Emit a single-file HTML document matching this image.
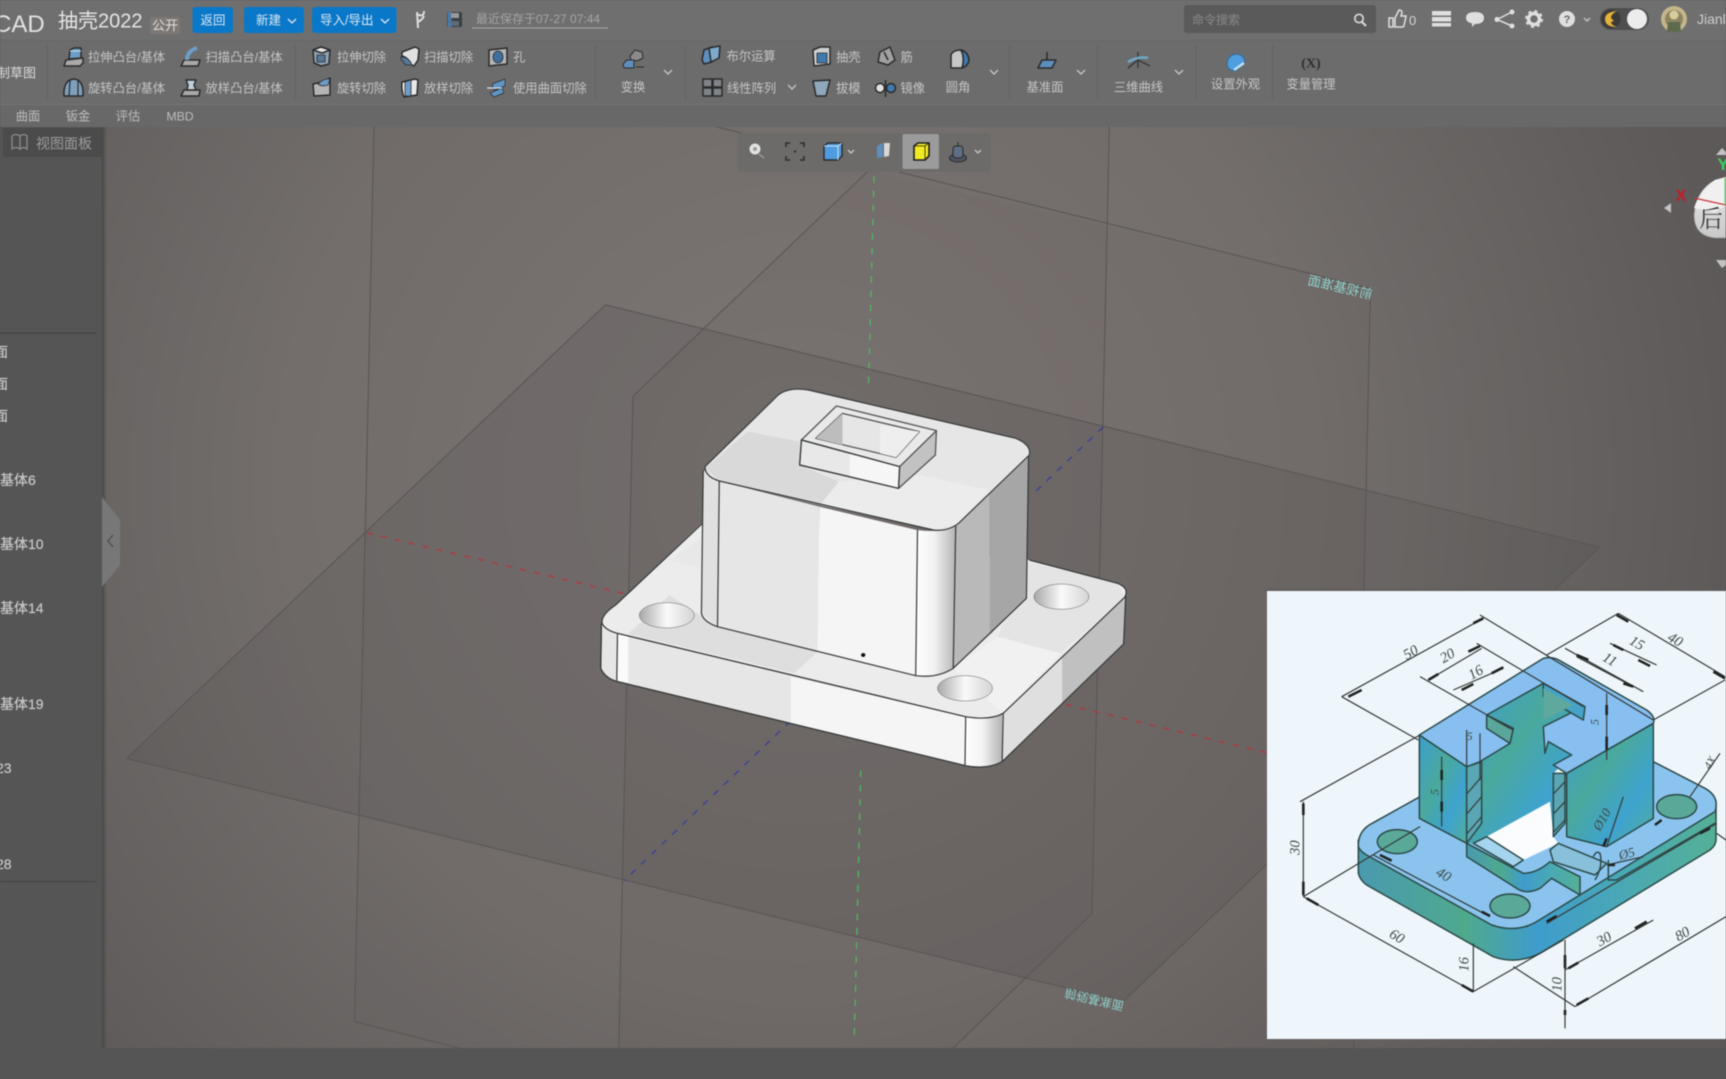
<!DOCTYPE html>
<html><head><meta charset="utf-8"><title>CAD</title>
<style>
html,body{margin:0;padding:0;width:1726px;height:1079px;overflow:hidden;background:#555}
svg{display:block;position:absolute;left:0;top:0;filter:blur(.5px)}
text{font-family:"Liberation Sans","Noto Sans CJK SC",sans-serif}
.r{font-size:12.3px;fill:#c6c6c6}
.c{font-size:12.3px;fill:#c6c6c6;text-anchor:middle}
.t{font-size:12.3px;fill:#bdbdbd;text-anchor:middle}
.s{font-size:14px;fill:#cccccc;stroke:#cccccc;stroke-width:.15}
.d{font-family:"Liberation Serif",serif;font-style:italic;font-size:44px;fill:#3f4a44}
.ln{stroke:#343a37;stroke-width:1.2;vector-effect:non-scaling-stroke;stroke-linejoin:round}
.n{fill:none}
.k{stroke:#2c4a48;stroke-width:1.5;vector-effect:non-scaling-stroke;stroke-linejoin:round}
.a{fill:none;stroke:#1f2422;stroke-width:2.6;vector-effect:non-scaling-stroke}
.m{stroke:#555;stroke-width:1.3;vector-effect:non-scaling-stroke;stroke-linejoin:round}
.ic{stroke:#2b2b2b;stroke-width:1.5;stroke-linejoin:round}
.chev{fill:none;stroke:#c0c0c0;stroke-width:1.5}
</style></head><body>
<svg width="1726" height="1079" viewBox="0 0 1726 1079" xmlns="http://www.w3.org/2000/svg">
<defs>
<radialGradient id="vp" gradientUnits="userSpaceOnUse" cx="800" cy="480" r="950">
<stop offset="0" stop-color="#7e7877"/><stop offset=".55" stop-color="#736e6c"/><stop offset="1" stop-color="#5c5958"/>
</radialGradient>
<linearGradient id="shd" x1="0" x2="1" y1="0" y2="0"><stop offset="0" stop-color="#494746"/><stop offset="1" stop-color="#494746" stop-opacity="0"/></linearGradient>
<linearGradient id="cyl" x1="0" x2="1" y1="0" y2="0"><stop offset="0" stop-color="#fff"/><stop offset=".45" stop-color="#f3f3f3"/><stop offset="1" stop-color="#b4b4b4"/></linearGradient>
<linearGradient id="hole" x1="0" x2="1" y1="0" y2="0"><stop offset="0" stop-color="#a8a8a8"/><stop offset=".5" stop-color="#fafafa"/><stop offset="1" stop-color="#d4d4d4"/></linearGradient>
<linearGradient id="teal" x1="0" x2="1" y1="0" y2="1"><stop offset="0" stop-color="#3d9ecf"/><stop offset=".4" stop-color="#4aa99c"/><stop offset=".7" stop-color="#3ea3cf"/><stop offset="1" stop-color="#52ad9c"/></linearGradient>
<linearGradient id="tealb" x1="0" x2="1" y1="0" y2="0"><stop offset="0" stop-color="#4a9ab0"/><stop offset=".3" stop-color="#4fa98d"/><stop offset=".5" stop-color="#3f9ccc"/><stop offset=".75" stop-color="#4aa9b4"/><stop offset="1" stop-color="#55b096"/></linearGradient>
<linearGradient id="cube" x1="0" x2="0" y1="0" y2="1"><stop offset="0" stop-color="#ececec"/><stop offset="1" stop-color="#c8c8c8"/></linearGradient>
</defs>

<!-- viewport -->
<rect x="0" y="120" width="1726" height="935" fill="url(#vp)"/>
<g transform="scale(1.1008)">
<polygon points="550,277 1453,497 1020,910 115,689" fill="#484444" fill-opacity=".14"/>
<polygon points="340,105 1008,105 992,830 865,953 420,953 322,928" fill="#484444" fill-opacity=".04"/>
<polygon points="790,155 1245,262 1230,953 562,953 575,360" fill="#484444" fill-opacity=".05"/>
<g fill="none" stroke="#5a5654" stroke-width="1">
<path d="M550,277 L1453,497 L1020,910 L115,689 Z"/>
<path d="M340,105 L322,928 L420,953 M1008,105 L992,830 L865,953"/>
<path d="M650,115 L1245,262 L1230,953"/>
<path d="M575,360 L562,953 M575,360 L810,135"/>
</g>
<g fill="none" stroke-width="1.2" stroke-dasharray="6 7">
<path d="M333,484 L570,540 M968,640 L1152,684" stroke="#b0383c"/>
<path d="M1002,388 L937,450 M718,655 L567,800" stroke="#3a3f9c"/>
<path d="M794,160 L789,352 M782,700 L776,945" stroke="#4fb85a"/>
</g>
<text transform="translate(1195,260) rotate(13) scale(-1,1) translate(-52,0)" style="font-size:12px;fill:#8fd0cc">前视基准面</text>
<text transform="translate(968,898) rotate(13) scale(1,-1)" style="font-size:11px;fill:#8fd0cc">前视基准面</text>
</g>

<!-- model -->
<g transform="translate(580,370) scale(.35714,.33333)">
<path class="m" d="M60,760 L58,895 Q70,925 105,935 L1080,1187 Q1140,1200 1182,1175 L1522,822 L1528,680 L1185,1030 L1080,1040 L105,790 Z" fill="#e6e6e6"/>
<polygon points="590,920 1080,1042 1080,1187 590,1060" fill="#f5f5f5"/>
<path d="M1080,1042 Q1140,1050 1182,1030 L1182,1175 Q1140,1200 1080,1187 Z" fill="url(#cyl)"/>
<polygon points="1182,1030 1350,855 1350,1000 1182,1175" fill="#dfdfdf"/>
<polygon points="1350,855 1526,680 1522,822 1350,1000" fill="#c0c0c0"/>
<polygon points="105,792 135,800 135,938 105,932" fill="#fafafa"/>
<path d="M62,760 Q58,735 100,705 L345,455 L1258,570 L1505,640 Q1540,655 1525,682 L1185,1030 Q1150,1052 1080,1040 L105,790 Q70,780 62,760 Z" fill="#ececec"/>
<polygon points="385,770 665,845 600,910 135,792 250,675" fill="#dedede"/>
<polygon points="250,570 345,595 345,500" fill="#e8e8e8"/>
<polygon points="1045,895 1170,800 1345,850 1185,1030" fill="#f1f1f1"/>
<polygon points="1250,575 1505,640 1525,682 1345,850 1170,800" fill="#e4e4e4"/>
<path class="ln n" d="M345,458 L100,705 Q58,735 62,760 Q70,780 105,790 L1080,1040 Q1150,1052 1185,1030 L1525,682 Q1540,655 1505,640 L1258,570"/>
<path class="ln n" d="M105,790 L103,932 M1080,1040 L1078,1187 M1185,1030 L1182,1175 M60,760 L58,895 Q70,925 105,935 L1080,1187 Q1140,1200 1182,1175 L1522,822 L1528,680"/>
<g class="m" fill="url(#hole)">
<ellipse cx="243" cy="736" rx="77" ry="38"/><ellipse cx="1078" cy="955" rx="77" ry="38"/><ellipse cx="1348" cy="680" rx="77" ry="38"/>
</g>
<polygon points="345,300 390,333 385,770 340,730" fill="#e0e0e0"/>
<polygon points="390,333 670,410 665,845 385,770" fill="#e6e6e6"/>
<polygon points="670,410 950,482 940,917 665,845" fill="#f5f5f5"/>
<path d="M945,480 Q1000,490 1052,468 L1045,895 Q1000,925 940,917 Z" fill="url(#cyl)"/>
<polygon points="1052,468 1147,370 1147,795 1045,895" fill="#b9b9b9"/>
<polygon points="1147,370 1256,255 1250,685 1147,795" fill="#a6a6a6"/>
<path class="ln n" d="M345,300 L340,730 Q345,755 385,770 L940,917 Q1000,925 1045,895 L1250,685 L1256,255 M390,333 L385,770 M945,480 L940,917 M1052,468 L1045,895"/>
<path d="M350,290 L555,75 Q585,50 640,60 L1220,205 Q1265,225 1258,255 L1060,460 Q1030,485 990,480 L390,333 Q350,320 350,290 Z" fill="#e6e6e6"/>
<polygon points="470,185 615,215 615,285 725,335 672,405 390,333 350,295" fill="#d9d9d9"/>
<polygon points="725,335 950,315 1145,360 1060,460 990,480 672,405" fill="#ececec"/>
<path class="ln n" d="M350,290 L555,75 Q585,50 640,60 L1220,205 Q1265,225 1258,255 L1060,460 Q1030,485 990,480 L390,333 Q350,320 350,290 Z"/>
<polygon class="m" points="620,210 718,108 998,182 895,290" fill="#e9e9e9"/>
<polygon class="m" points="620,210 895,290 892,355 615,285" fill="#e8e8e8"/>
<polygon points="755,250 895,290 892,355 755,318" fill="#f6f6f6"/>
<polygon class="m" points="895,290 998,182 995,255 892,355" fill="#c2c2c2"/>
<path class="ln n" d="M620,210 L895,290 L892,355 L615,285 Z"/>
<polygon class="m" points="660,205 735,130 950,185 885,262" fill="#e6e6e6"/>
<polygon points="660,205 735,130 735,225" fill="#bdbdbd"/>
<polygon points="840,165 950,185 885,262 840,250" fill="#eeeeee"/>
<circle cx="793" cy="855" r="6" fill="#111"/>
</g>

<!-- sidebar -->
<rect x="102" y="127" width="5" height="921" fill="url(#shd)"/>
<rect x="0" y="127" width="102" height="921" fill="#555"/>
<rect x="0" y="1048" width="1726" height="31" fill="#555"/>
<rect x="3" y="128" width="99" height="29" fill="#4b4b4b"/>
<path d="M12,136 Q16,133 20,136 L20,149 Q16,146 12,149 Z M20,136 Q24,133 27,136 L27,149 Q24,146 20,149 Z" fill="none" stroke="#8c8c8c" stroke-width="1.3"/>
<text x="36" y="148.500" style="font-size:14px;fill:#9c9c9c">视图面板</text>
<rect x="0" y="332.500" width="96" height="1.200" fill="#444"/>
<rect x="0" y="881" width="96" height="1.200" fill="#444"/>
<text class="s" x="-6" y="357">面</text><text class="s" x="-6" y="389">面</text><text class="s" x="-6" y="421">面</text>
<text class="s" x="0" y="485">基体6</text><text class="s" x="0" y="549">基体10</text><text class="s" x="0" y="613">基体14</text><text class="s" x="0" y="709">基体19</text>
<text class="s" x="-4" y="773">23</text><text class="s" x="-4" y="869">28</text>
<polygon points="102,497 120,520 120,565 102,587" fill="#777"/>
<path d="M113,535 L108,541 L113,547" fill="none" stroke="#4c4c4c" stroke-width="1.300"/>

<!-- top bar -->
<rect x="0" y="0" width="1726" height="40" fill="#6f6f6f"/>
<rect x="0" y="40" width="1726" height="64" fill="#6c6c6c"/>
<rect x="0" y="40" width="1726" height="1" fill="#676767"/>
<rect x="0" y="104" width="1726" height="23" fill="#686868"/>
<rect x="0" y="104" width="1726" height="1" fill="#737373"/>
<text x="-6" y="32" style="font-size:24px;fill:#e2e2e2">CAD</text>
<text x="58" y="27.500" style="font-size:20px;fill:#e6e6e6">抽壳2022</text>
<rect x="150" y="17" width="30" height="17" rx="2" fill="#7e7874"/>
<text x="165" y="30" style="font-size:13px;fill:#e0e0e0;text-anchor:middle">公开</text>
<rect x="192.500" y="7" width="40.500" height="26" rx="3" fill="#0a78c8"/>
<text x="213" y="24.500" style="font-size:12.500px;fill:#dce8f2;text-anchor:middle">返回</text>
<rect x="244" y="7" width="60" height="26" rx="3" fill="#0a78c8"/>
<text x="256" y="24.500" style="font-size:12.500px;fill:#dce8f2">新建</text>
<path d="M288,19 L292,23 L296,19" fill="none" stroke="#dce8f2" stroke-width="1.300"/>
<rect x="312" y="7" width="84.500" height="26" rx="3" fill="#0a78c8"/>
<text x="320" y="24.500" style="font-size:12.500px;fill:#dce8f2">导入/导出</text>
<path d="M381,19 L385,23 L389,19" fill="none" stroke="#dce8f2" stroke-width="1.300"/>
<path d="M417,12 L418,28 M417,14 Q424,18 424,11 M418,22 Q423,19 424,16" fill="none" stroke="#dedede" stroke-width="2"/>
<rect x="447" y="12" width="15" height="15" rx="1" fill="#3a3f45"/><rect x="447.500" y="12" width="4" height="15" fill="#4a78a8"/><rect x="451" y="13" width="8" height="5" fill="#9a9a9a"/><rect x="451" y="21" width="8" height="5" fill="#5e6a78"/>
<text x="476" y="23" style="font-size:12px;fill:#a4a4a4">最近保存于07-27 07:44</text>
<rect x="472" y="27.500" width="136" height="1" fill="#a4a4a4"/>

<!-- right top -->
<rect x="1184" y="5" width="192" height="28" rx="3" fill="#5a5a5a"/>
<text x="1192" y="24" style="font-size:12px;fill:#8a8a8a">命令搜索</text>
<circle cx="1359" cy="18.500" r="4.200" fill="none" stroke="#d8d8d8" stroke-width="1.700"/><path d="M1362,22 L1366,26" stroke="#d8d8d8" stroke-width="2"/>
<path d="M1389,18 L1393,18 L1393,27 L1389,27 Z M1395,18 L1399,10 Q1402,10 1402,13 L1401,16 L1406,16 Q1406,17 1404,25 Q1404,27 1402,27 L1395,27 Z" fill="none" stroke="#e0e0e0" stroke-width="1.500"/>
<text x="1409" y="25" style="font-size:13px;fill:#d8d8d8">0</text>
<g fill="#dfdfdf"><rect x="1432" y="11" width="19" height="4.500"/><rect x="1432" y="17" width="19" height="4.500"/><rect x="1432" y="23" width="19" height="3.500"/></g>
<path d="M1475,12 Q1484,12 1484,18 Q1484,24 1475,24 L1472,27 L1472,23.500 Q1466,22 1466,18 Q1466,12 1475,12 Z" fill="#dfdfdf"/>
<path d="M1512,12 L1497,19.500 L1512,26" fill="none" stroke="#dfdfdf" stroke-width="1.500"/><circle cx="1512" cy="12" r="2.500" fill="#dfdfdf"/><circle cx="1497" cy="19.500" r="2.500" fill="#dfdfdf"/><circle cx="1512" cy="26" r="2.500" fill="#dfdfdf"/>
<circle cx="1534" cy="19" r="5.500" fill="none" stroke="#dfdfdf" stroke-width="3.500"/><circle cx="1534" cy="19" r="8" fill="none" stroke="#dfdfdf" stroke-width="2" stroke-dasharray="3 3.300"/>
<circle cx="1567" cy="19" r="8" fill="#dfdfdf"/><text x="1567" y="23" style="font-size:11px;fill:#666;text-anchor:middle;font-weight:bold">?</text>
<path d="M1584,18 L1587,21 L1590,18" class="chev"/>
<rect x="1600" y="8" width="49" height="22" rx="11" fill="#4e4e4e"/>
<circle cx="1611" cy="19" r="9.500" fill="#3c3a38"/>
<path d="M1617,11 Q1605,12 1605,19 Q1605,27 1617,27 Q1611,25 1611,22 L1614,21 L1611,18 Q1611,14 1617,11 Z" fill="#e6b23a"/>
<circle cx="1637" cy="19" r="10" fill="#ececec"/>
<circle cx="1674" cy="19" r="13" fill="#c4b68a"/><circle cx="1674" cy="19" r="9" fill="#8d8560"/><circle cx="1674" cy="15" r="4.500" fill="#d8cc9c"/><path d="M1667,32 L1668,22 L1680,22 L1681,32 Z" fill="#5e6a4e"/>
<text x="1697" y="24" style="font-size:14px;fill:#cfcfcf">Jianl</text>

<!-- ribbon separators -->
<g fill="#646464"><rect x="47" y="45" width="1" height="55"/><rect x="295" y="45" width="1" height="55"/><rect x="595" y="45" width="1" height="55"/><rect x="685" y="45" width="1" height="55"/><rect x="1009" y="45" width="1" height="55"/><rect x="1097" y="45" width="1" height="55"/><rect x="1195.500" y="45" width="1" height="55"/><rect x="1272" y="45" width="1" height="55"/></g>
<text x="-3" y="77.500" style="font-size:13px;fill:#dcdcdc">制草图</text>

<!-- feature icons -->
<g class="ic">
<path d="M64,66 L66,60 L83,58 L83,63 L80,66 Z" fill="#a9a9a9"/><path d="M69,59 L70,50 L74,48 L81,48 L81,58 Z" fill="#6d9dc6"/><path d="M70,51 L81,51" fill="none" stroke="#cfe0ec" stroke-width="1"/>
<path d="M64,96 Q63,80 74,79 Q84,80 83,96 Z" fill="#7ea0bc"/><path d="M70,81 L69,96 M78,81 L78,96" fill="none" stroke="#2b2b2b" stroke-width="1.200"/>
<path d="M181,66 L184,60 L200,60 L198,66 Z" fill="#a9a9a9"/><path d="M187,60 Q187,51 197,48" fill="none" stroke="#6d9dc6" stroke-width="4"/>
<path d="M181,96 L184,90 L200,90 L199,96 Z" fill="#a9a9a9"/><path d="M187,90 L188,85 L186,80 L196,80 L194,85 L196,90 Z" fill="#bcd0de"/>
<path d="M313,50 L321,47 L330,50 L329,64 L321,66 L314,63 Z" fill="#8fa2b4"/><path d="M313,50 L321,47 L330,50 L322,53 Z" fill="#e8e8e8"/><rect x="317" y="55" width="8" height="7" fill="#56789a" stroke-width=".8"/>
<path d="M313,84 L322,82 L330,78 L330,95 L314,96 Z" fill="#b4b4b4"/><path d="M318,84 Q324,78 330,79 L328,85 Q322,87 318,84 Z" fill="#6d9dc6" stroke-width=".8"/>
<path d="M402,52 L415,47 L419,49 L418,60 L414,66 L410,64 Q409,58 402,56 Z" fill="#e0e0e0"/><path d="M401,57 Q409,57 412,65 L405,65 Q404,61 401,60 Z" fill="#56789a" stroke-width=".8"/>
<path d="M402,82 L415,79 L418,80 L417,95 L404,97 Q401,90 402,82 Z" fill="#e8e8e8"/><path d="M405,82 L411,80 L411,96 L405,96 Z" fill="#6d9dc6" stroke-width=".8"/>
<path d="M489,50 L507,48 L507,64 L489,66 Z" fill="#b4b4b4"/><ellipse cx="498" cy="57" rx="5" ry="6" fill="#3f6f9c" stroke-width=".8"/>
<path d="M492,84 L505,79 L505,86 L494,90 Z M490,93 L502,88 L504,93 L494,97 Z" fill="#5e94c4" stroke-width=".7"/><path d="M487,88 L502,88" stroke="#dfe8ee" stroke-width="1.200"/>
<path d="M630,56 L635,50 L642,52 L643,58 L637,61 L631,60 Z" fill="#8a8a8a" stroke-width="1"/><path d="M623,64 L627,60 L634,60 L634,68 L624,68 Z" fill="#5e8ebc" stroke-width="1"/><path d="M636,67 L644,67" fill="none" stroke-width="1"/>
<path d="M704,50 L712,47 L712,62 L704,64 L702,60 Z" fill="#5e8ebc"/><path d="M709,48 L720,46 L719,58 L711,62 Z" fill="#7ea8cc"/>
<g fill="#7f8488"><rect x="703" y="79" width="9" height="8"/><rect x="713" y="79" width="9" height="8"/><rect x="703" y="88" width="9" height="8"/><rect x="713" y="88" width="9" height="8"/></g>
<path d="M813,50 L820,47 L830,47 L830,64 L814,66 Z" fill="#cfcfcf"/><rect x="817" y="53" width="10" height="10" fill="#3f79ad" stroke-width=".8"/>
<path d="M813,81 L830,80 L826,96 L816,96 Z" fill="#8fa8bc"/>
<path d="M878,62 L880,52 L890,47 L895,60 L888,65 Z" fill="#a0a0a0"/><path d="M884,52 L888,60" fill="none"/>
<circle cx="880" cy="88" r="4.500" fill="#e0e0e0"/><circle cx="891" cy="88" r="4.500" fill="#3f79ad"/><path d="M885.500,80 L885.500,97" fill="none"/>
<path d="M951,55 Q953,50 961,50 Q968,52 969,60 Q968,66 962,68 L951,68 Z" fill="#c6c6c6"/><path d="M961,50 Q968,52 969,60 Q968,66 962,68 Q965,58 961,50 Z" fill="#3f79ad"/>
<polygon points="1038,68 1052,68 1056,60 1042,60" fill="#5e8ebc"/><path d="M1047,52 L1047,60" fill="none"/>
<path d="M1128,68 L1138,60 L1150,66 M1138,52 L1138,68" fill="none" stroke="#3a3a3a"/><path d="M1128,62 Q1138,56 1148,58" fill="none" stroke="#6fa8c8" stroke-width="2.500"/>
<path d="M1227,65 Q1227,55 1236,54 Q1244,54 1245,62 L1236,71 Q1228,71 1227,65 Z" fill="#4f9ee0" stroke="#3f6f96"/><path d="M1234,70 L1244,63" stroke="#bfe4f2" stroke-width="2.500"/>
</g>
<g class="chev">
<path d="M664,70 L668,74 L672,70"/><path d="M788,85 L792,89 L796,85"/><path d="M990,70 L994,74 L998,70"/><path d="M1077,70 L1081,74 L1085,70"/><path d="M1175,70 L1179,74 L1183,70"/>
</g>
<g>
<text class="r" x="88" y="61.500">拉伸凸台/基体</text><text class="r" x="205.500" y="61.500">扫描凸台/基体</text>
<text class="r" x="88" y="92.500">旋转凸台/基体</text><text class="r" x="205.500" y="92.500">放样凸台/基体</text>
<text class="r" x="337" y="61.500">拉伸切除</text><text class="r" x="424" y="61.500">扫描切除</text><text class="r" x="513" y="61.500">孔</text>
<text class="r" x="337" y="92.500">旋转切除</text><text class="r" x="424" y="92.500">放样切除</text><text class="r" x="513" y="92.500">使用曲面切除</text>
<text class="c" x="633" y="91.500">变换</text>
<text class="r" x="726.500" y="60.500">布尔运算</text><text class="r" x="727" y="92.500">线性阵列</text>
<text class="r" x="836" y="61.500">抽壳</text><text class="r" x="836" y="92.500">拔模</text>
<text class="r" x="900.500" y="61.500">筋</text><text class="r" x="900.500" y="92.500">镜像</text>
<text class="c" x="958" y="91.500">圆角</text><text class="c" x="1045" y="91.500">基准面</text><text class="c" x="1138.500" y="91.500">三维曲线</text>
<text class="c" x="1235.500" y="88.500">设置外观</text><text class="c" x="1311" y="88.500">变量管理</text>
<text x="1311" y="67.500" style="font-family:'Liberation Serif',serif;font-size:14px;font-weight:bold;fill:#2e2e2e;text-anchor:middle">(X)</text>
</g>
<text class="t" x="28" y="120.500">曲面</text><text class="t" x="78" y="120.500">钣金</text><text class="t" x="128" y="120.500">评估</text><text class="t" x="180" y="120.500">MBD</text>

<!-- view toolbar -->
<rect x="738" y="133" width="253" height="39" rx="3" fill="#6d6b69"/>
<rect x="902.500" y="134" width="36.500" height="35" rx="2" fill="#9b9b9b"/>
<circle cx="755" cy="149" r="5.500" fill="#e2e2e2"/><circle cx="755" cy="149" r="2" fill="#9a9a9a"/><path d="M759,154 L764,158" stroke="#b0b0b0" stroke-width="1"/>
<path d="M786,147 L786,143 L790,143 M800,143 L804,143 L804,147 M804,156 L804,160 L800,160 M790,160 L786,160 L786,156" fill="none" stroke="#2e2e2e" stroke-width="1.600"/><circle cx="795" cy="151.500" r="1.200" fill="#2e2e2e"/>
<path d="M824,146 L828,143 L842,143 L842,156 L838,160 L824,160 Z" fill="#4f9ce0" stroke="#2a2a2a" stroke-width="1.400"/><path d="M824,146 L838,146 L842,143 M838,146 L838,160" fill="none" stroke="#cfe2f2" stroke-width="1"/>
<path d="M848,150 L851,153 L854,150" class="chev"/>
<path d="M877,146 L883,143 L883,157 L877,158 Z" fill="#5e8ebc"/><path d="M884,143 L890,143 L889,156 L884,157 Z" fill="#d8d8d8"/>
<path d="M914,146 L918,143 L929,143 L929,156 L925,160 L914,160 Z" fill="#f2ea22" stroke="#1e1e1e" stroke-width="1.600"/><path d="M914,146 L925,146 L929,143 M925,146 L925,160" fill="none" stroke="#1e1e1e" stroke-width=".8"/>
<ellipse cx="958" cy="158" rx="8.500" ry="4" fill="#4e5560" stroke="#2a2a2a"/><rect x="953" y="146" width="10" height="12" rx="3" fill="#5e6e84" stroke="#2a2a2a"/><path d="M958,146 L958,142" stroke="#2a2a2a"/>
<path d="M975,150 L978,153 L981,150" class="chev"/>

<!-- nav cube -->
<path d="M1694,215 Q1696,190 1715,180 L1726,177 L1726,238 L1715,238 Q1694,236 1694,215 Z" fill="url(#cube)" stroke="#8a8a8a" stroke-width=".7"/>
<path d="M1694,208 Q1700,190 1715,180 L1726,177 L1726,205 L1715,212 Z" fill="#f0f0f0"/>
<path d="M1694,198 L1726,205" stroke="#c8353b" stroke-width="1.300"/>
<path d="M1725,178 L1725,205" stroke="#6dd07a" stroke-width="1.300"/>
<text x="1699" y="227" style="font-family:'Liberation Serif','Noto Serif CJK SC',serif;font-size:24px;fill:#3a3a3a">后</text>
<text x="1681" y="201" style="font-size:17px;font-weight:bold;fill:#c21d2a;text-anchor:middle">X</text>
<text x="1723" y="170" style="font-size:17px;font-weight:bold;fill:#3ecf5a;text-anchor:middle">Y</text>
<polygon points="1664,208 1671,203 1671,213" fill="#c2c2c2"/>
<polygon points="1722,148 1716,155 1726,155 1726,152" fill="#c2c2c2"/>
<polygon points="1716,260 1726,260 1726,265 1722,268" fill="#c2c2c2"/>

<!-- photo inset -->
<rect x="1267" y="591" width="459" height="448" fill="#eef6fb"/>
<rect x="1264" y="588" width="462" height="3" fill="#5e5b5a" opacity=".5"/>
<g transform="translate(1260,580) scale(.33333)">
<path class="k" d="M295,780 L295,880 Q300,900 320,915 L700,1130 Q770,1155 840,1120 L1350,810 Q1368,795 1368,780 L1368,680 L800,1040 Z" fill="url(#tealb)"/>
<path class="k" d="M295,795 Q295,750 340,728 L480,650 L1180,545 L1335,625 Q1380,650 1365,695 L830,1025 Q770,1060 695,1035 L320,825 Q295,810 295,795 Z" fill="#8ac4ee"/>
<ellipse class="k" cx="412" cy="785" rx="60" ry="36" fill="#5aa998"/>
<ellipse class="k" cx="750" cy="978" rx="60" ry="36" fill="#5aa998"/>
<ellipse class="k" cx="1250" cy="680" rx="60" ry="36" fill="#5aa998"/>
<!-- inner back wall underlay -->
<polygon points="620,560 680,405 850,310 975,380 935,525 880,580 880,790 620,790" fill="url(#teal)"/>
<polygon class="k" points="478,465 620,560 620,790 478,715" fill="url(#teal)"/>
<polygon class="k" points="920,580 1180,430 1180,715 1040,800 920,770" fill="url(#teal)"/>
<polygon points="680,770 870,665 880,770 895,790 790,840" fill="#fafcfd"/>
<path class="k" d="M620,790 L790,880 Q830,880 870,845 L960,890 L960,945 L875,895 L840,925 Q800,945 770,925 L620,830 Z" fill="url(#tealb)"/>
<polygon class="k" points="640,790 680,770 790,840 760,860" fill="#a5d4ee"/>
<polygon class="k" points="880,845 870,810 895,790 1040,850 1005,885" fill="#88c0dc"/>
<path class="k" d="M478,465 L850,235 Q880,228 905,245 L1160,390 Q1188,410 1180,430 L920,580 L880,555 L935,525 L865,485 L855,520 L850,440 L970,380 L850,310 L680,405 L760,445 L750,490 L660,545 L620,560 Z" fill="#86bff0"/>
<polygon class="k" points="680,405 750,445 760,445 750,490 680,445" fill="#5aa69a"/>
<polygon class="k" points="850,310 975,380 970,420 850,350" fill="#46a3c8"/>
<polygon points="850,325 940,375 850,420" fill="#5fa89e"/>
<polygon class="k" points="620,560 665,545 665,730 620,790" fill="#5aa6b4"/>
<polygon class="k" points="880,580 915,580 915,730 880,770" fill="#5aa6b4"/>
<path class="ln n" d="M622,640 L665,590 M622,700 L665,650 M622,760 L665,710 M882,640 L915,605 M882,700 L915,665 M882,755 L915,720"/>
<path class="k n" d="M1005,900 Q1030,860 1020,820 Q1010,810 1000,830 M1045,840 L1045,900 L1070,900 L1365,730"/>
<path class="ln n" d="M245,350 L475,480 M660,105 L1180,420 M245,350 L670,115 M480,290 L760,450 M505,300 L665,205 M580,330 L730,265 M650,190 L970,380 M1075,100 L860,225 M1075,100 L1395,290 M1395,300 L1180,420 M915,205 L1150,335 M950,230 L1120,320 M1050,190 L1190,255 M480,465 L120,665 M130,665 L130,950 M130,950 L480,740 M130,950 L640,1235 M640,1090 L640,1235 M640,1235 L910,1080 M915,1080 L915,1345 M915,1170 L1180,1020 M945,1280 L1398,1010 M945,1280 L760,1160 M1040,340 L1040,540 M545,530 L545,740 M620,450 L620,560 M660,460 L660,600 M1040,800 L1090,650 M1040,855 L1150,830 M1290,650 L1380,520 M340,825 L690,1010 M860,1030 L1370,730 M1370,760 L1398,780"/>
<path class="a" d="M265,350 L305,330 M640,130 L670,115 M1070,105 L1105,125 M1360,275 L1395,295 M130,670 L130,705 M130,905 L130,945 M140,955 L175,975 M605,1215 L640,1235 M915,1125 L915,1165 M915,1290 L915,1305 M950,1275 L985,1255 M925,1165 L955,1148 M1125,1045 L1160,1025 M505,300 L535,282 M625,215 L660,198 M605,330 L640,312 M695,280 L730,262 M1060,195 L1090,210 M1135,240 L1170,258 M950,225 L985,240 M1090,310 L1120,320 M1040,375 L1040,405 M1040,470 L1040,510 M545,570 L545,600 M545,665 L545,695 M360,825 L395,842 M665,995 L690,1008 M860,1025 L890,1008 M1320,760 L1350,745 M1185,735 L1205,720 M1030,800 L1040,775 M1045,855 L1065,855"/>
<text class="d" transform="translate(440,240) rotate(-30)">50</text>
<text class="d" transform="translate(550,250) rotate(-30)">20</text>
<text class="d" transform="translate(635,300) rotate(-30)">16</text>
<text class="d" transform="translate(1220,180) rotate(30)">40</text>
<text class="d" transform="translate(1105,190) rotate(30)">15</text>
<text class="d" transform="translate(1025,240) rotate(30)">11</text>
<text class="d" transform="translate(118,825) rotate(-90)">30</text>
<text class="d" transform="translate(385,1070) rotate(30)">60</text>
<text class="d" transform="translate(525,885) rotate(30)">40</text>
<text class="d" transform="translate(1020,1100) rotate(-30)">30</text>
<text class="d" transform="translate(1255,1085) rotate(-30)">80</text>
<text class="d" transform="translate(625,1175) rotate(-90)">16</text>
<text class="d" transform="translate(905,1235) rotate(-90)">10</text>
<text class="d" transform="translate(1020,755) rotate(-60)" style="font-size:40px">Ø10</text>
<text class="d" transform="translate(1080,840) rotate(-15)" style="font-size:40px">Ø5</text>
<text class="d" transform="translate(1350,570) rotate(-60)" style="font-size:34px">4X</text>
<text class="d" transform="translate(620,480)" style="font-size:36px">5</text>
<text class="d" transform="translate(1015,435) rotate(-90)" style="font-size:36px">5</text>
<text class="d" transform="translate(535,645) rotate(-90)" style="font-size:36px">5</text>
</g>
</svg>
</body></html>
